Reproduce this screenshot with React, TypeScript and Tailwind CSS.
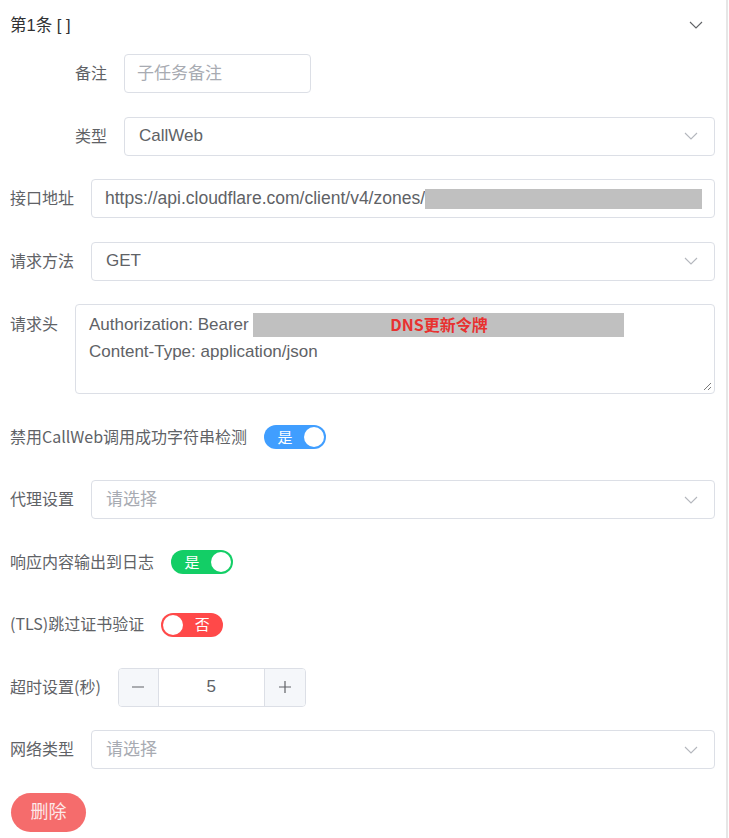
import React from 'react';

const FONT = { fontFamily: '"Liberation Sans", "Noto Sans CJK SC", sans-serif' };
const CJK = { fontFamily: '"Noto Sans CJK SC", sans-serif' };

function Arrow({ className = '' }: { className?: string }) {
  return (
    <svg width="14" height="8" viewBox="0 0 14 8" fill="none" className={className}>
      <polyline points="1,1 7,7 13,1" stroke="currentColor" strokeWidth="1.1" />
    </svg>
  );
}

function Label({ children, w }: { children: React.ReactNode; w?: string }) {
  return (
    <div className={`shrink-0 text-[16px] leading-[20px] pb-[3px] text-[#606266] pr-[17px] ${w ?? ''}`} style={CJK}>{children}</div>
  );
}

function Select({ value, placeholder }: { value?: string; placeholder?: string }) {
  return (
    <div className="flex-1 h-full flex items-center justify-between rounded-[4px] border border-[#dcdfe6] pl-[14px] pr-[16px]">
      <span className={`text-[17px] ${value ? 'text-[#606266]' : 'text-[#a8abb2]'}`}>{value ?? placeholder}</span>
      <Arrow className="text-[#b4b7bd]" />
    </div>
  );
}

function Switch({ on, text, color }: { on: boolean; text: string; color: string }) {
  return (
    <div className={`w-[62px] h-[24px] rounded-full flex items-center px-[2px] ${color} ${on ? 'flex-row' : 'flex-row-reverse'}`}>
      <span className="flex-1 text-center text-[15px] text-white leading-none">{text}</span>
      <span className="w-[20px] h-[20px] rounded-full bg-white" />
    </div>
  );
}

export default function App() {
  return (
    <div className="w-[729px] min-h-[838px] bg-white flex" style={FONT}>
      <div className="flex-1 pl-[10px] pr-[11px] border-r-2 border-[#e6e6e6]">
        <div className="h-[50px] flex items-center justify-between pr-[12px]">
          <span className="text-[16.5px] text-[#303133]">第1条 [ ]</span>
          <Arrow className="text-[#606266]" />
        </div>

        <div className="flex flex-col gap-[23.5px] mt-[4px]">
          {/* 备注 */}
          <div className="h-[39px] flex items-center">
            <Label w="w-[114px] text-right">备注</Label>
            <div className="w-[187px] h-full rounded-[4px] border border-[#dcdfe6] flex items-center pl-[12px] text-[17px] text-[#a8abb2]">子任务备注</div>
          </div>

          {/* 类型 */}
          <div className="h-[39px] flex items-center">
            <Label w="w-[114px] text-right">类型</Label>
            <Select value="CallWeb" />
          </div>

          {/* 接口地址 */}
          <div className="h-[39px] flex items-center">
            <Label>接口地址</Label>
            <div className="flex-1 h-full rounded-[4px] border border-[#dcdfe6] flex items-center pl-[13px] pr-[12px] text-[17.5px] text-[#606266]">
              <span className="whitespace-nowrap">https://api.cloudflare.com/client/v4/zones/</span>
              <span className="flex-1 h-[20px] bg-[#c0c0c0]" />
            </div>
          </div>

          {/* 请求方法 */}
          <div className="h-[39px] flex items-center">
            <Label>请求方法</Label>
            <Select value="GET" />
          </div>

          {/* 请求头 */}
          <div className="h-[90px] flex items-start">
            <Label><div className="pt-[9px]">请求头</div></Label>
            <div className="relative flex-1 h-full rounded-[4px] border border-[#dcdfe6] pl-[13px] pt-[6px] text-[17px] leading-[27px] text-[#606266]">
              <div className="flex items-center">
                <span className="whitespace-nowrap">Authorization: Bearer&nbsp;</span>
                <span className="w-[371px] h-[24px] bg-[#c0c0c0] flex items-center justify-center text-[16px] font-bold text-[#e8312f]" style={CJK}>DNS更新令牌</span>
              </div>
              <div>Content-Type: application/json</div>
              <svg width="9" height="9" viewBox="0 0 9 9" className="absolute right-[2px] bottom-[2px] text-[#7a7a7a]">
                <line x1="1" y1="8" x2="8" y2="1" stroke="currentColor" strokeWidth="1" />
                <line x1="5" y1="8" x2="8" y2="5" stroke="currentColor" strokeWidth="1" />
              </svg>
            </div>
          </div>

          {/* 禁用 */}
          <div className="h-[39px] flex items-center">
            <Label>禁用CallWeb调用成功字符串检测</Label>
            <Switch on text="是" color="bg-[#409eff]" />
          </div>

          {/* 代理设置 */}
          <div className="h-[39px] flex items-center">
            <Label>代理设置</Label>
            <Select placeholder="请选择" />
          </div>

          {/* 响应 */}
          <div className="h-[39px] flex items-center">
            <Label>响应内容输出到日志</Label>
            <Switch on text="是" color="bg-[#13ce66]" />
          </div>

          {/* TLS */}
          <div className="h-[39px] flex items-center">
            <Label>(TLS)跳过证书验证</Label>
            <Switch on={false} text="否" color="bg-[#ff4949]" />
          </div>

          {/* 超时 */}
          <div className="h-[39px] flex items-center">
            <Label>超时设置(秒)</Label>
            <div className="w-[188px] h-full rounded-[4px] border border-[#dcdfe6] flex overflow-hidden">
              <div className="w-[40px] bg-[#f5f7fa] border-r border-[#dcdfe6] flex items-center justify-center">
                <svg width="16" height="16" viewBox="0 0 16 16"><line x1="2" y1="8" x2="14" y2="8" stroke="#606266" strokeWidth="1.2" /></svg>
              </div>
              <div className="flex-1 flex items-center justify-center text-[17px] text-[#606266]">5</div>
              <div className="w-[41px] bg-[#f5f7fa] border-l border-[#dcdfe6] flex items-center justify-center">
                <svg width="16" height="16" viewBox="0 0 16 16"><line x1="2" y1="8" x2="14" y2="8" stroke="#606266" strokeWidth="1.2" /><line x1="8" y1="2" x2="8" y2="14" stroke="#606266" strokeWidth="1.2" /></svg>
              </div>
            </div>
          </div>

          {/* 网络类型 */}
          <div className="h-[39px] flex items-center">
            <Label>网络类型</Label>
            <Select placeholder="请选择" />
          </div>

          <div className="h-[39px] flex items-center">
            <button className="w-[75px] h-full ml-[1px] rounded-full bg-[#f56c6c] text-[18px] text-[#fde9e9]">删除</button>
          </div>
        </div>
      </div>
      <div className="w-[1px]" />
    </div>
  );
}
